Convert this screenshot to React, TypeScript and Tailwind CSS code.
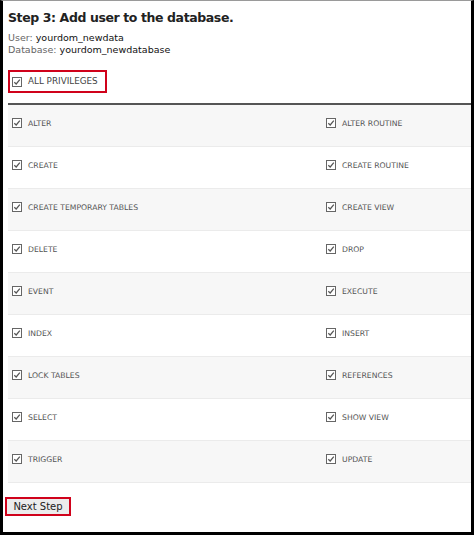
const privileges: [string, string][] = [
  ['ALTER', 'ALTER ROUTINE'],
  ['CREATE', 'CREATE ROUTINE'],
  ['CREATE TEMPORARY TABLES', 'CREATE VIEW'],
  ['DELETE', 'DROP'],
  ['EVENT', 'EXECUTE'],
  ['INDEX', 'INSERT'],
  ['LOCK TABLES', 'REFERENCES'],
  ['SELECT', 'SHOW VIEW'],
  ['TRIGGER', 'UPDATE'],
]

function CheckIcon() {
  return (
    <svg width="10" height="10" viewBox="0 0 10 10" className="shrink-0">
      <rect x="0.5" y="0.5" width="9" height="9" fill="#fff" stroke="#666" strokeWidth="1" />
      <path d="M2.3 5.2 L4.2 7 L7.8 2.6" fill="none" stroke="#555" strokeWidth="1.2" />
    </svg>
  )
}

function Priv({ label }: { label: string }) {
  return (
    <div className="flex items-center gap-[6px]">
      <CheckIcon />
      <span className="text-[7.7px] text-[#555]">{label}</span>
    </div>
  )
}

export default function App() {
  return (
    <div
      className="w-[474px] h-[535px] bg-white border-t border-t-[#9a9a9a] border-l-[3px] border-r-[3px] border-b-[3px] border-l-black border-r-black border-b-black pl-[5px] pt-[9px]"
      style={{ fontFamily: '"DejaVu Sans", Verdana, sans-serif' }}
    >
      <h1 className="text-[12.5px] font-bold text-[#222] leading-[16px] tracking-[-0.4px]">
        Step 3: Add user to the database.
      </h1>

      <div className="mt-[6px] text-[9.5px] leading-[12px]">
        <p>
          <span className="text-[#666]">User:</span> <span className="text-[#111]">yourdom_newdata</span>
        </p>
        <p>
          <span className="text-[#666]">Database:</span> <span className="text-[#111]">yourdom_newdatabase</span>
        </p>
      </div>

      <div className="mt-[14px] w-[99px] h-[23px] border-2 border-[#d0021b] flex items-center gap-[6px] pl-[2px]">
        <CheckIcon />
        <span className="text-[8.8px] text-[#444]">ALL PRIVILEGES</span>
      </div>

      <div className="mt-[10px] border-t-2 border-[#555]">
        {privileges.map(([a, b], i) => (
          <div
            key={a}
            className={`h-[42px] grid grid-cols-[314px_1fr] items-center pb-[4px] pl-[4px] border-b border-[#ebebeb] ${
              i % 2 === 0 ? 'bg-[#f7f7f7]' : 'bg-white'
            }`}
          >
            <Priv label={a} />
            <Priv label={b} />
          </div>
        ))}
      </div>

      <button className="mt-[14px] -ml-[3px] h-[19px] w-[66px] border-2 border-[#d0021b] bg-[#ececec] text-[10px] text-[#222] leading-none">
        Next Step
      </button>
    </div>
  )
}
